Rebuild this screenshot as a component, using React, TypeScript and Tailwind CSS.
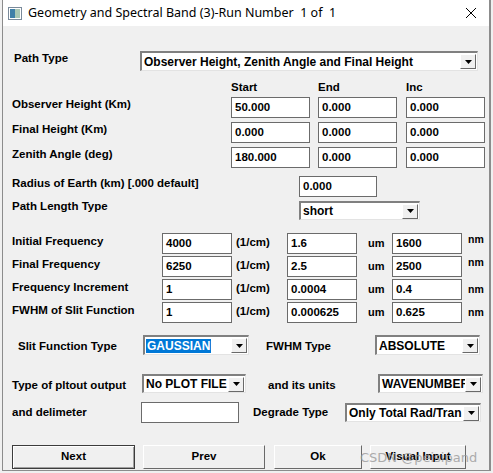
import React from "react";

const FONT = { fontFamily: '"Liberation Sans", Arial, sans-serif' };

function Field({ w, value, h = 21, ml = 0 }: { w: number; value: string; h?: number; ml?: number }) {
  return (
    <div
      className="bg-white border border-[#6b6b6b] flex items-center pl-[3px] text-[11.5px] font-bold text-black shrink-0"
      style={{ width: w, height: h, marginLeft: ml }}
    >
      {value}
    </div>
  );
}

function Arrow() {
  return (
    <div className="w-[16px] h-[15px] bg-[#f0f0f0] border-t border-l border-t-white border-l-white border-r border-b border-r-[#696969] border-b-[#696969] flex items-center justify-center shrink-0 mr-[1px]">
      <svg width="7" height="4" viewBox="0 0 7 4">
        <path d="M0 0h7L3.5 4z" fill="#000" />
      </svg>
    </div>
  );
}

function Combo({
  w,
  value,
  ml = 0,
  h = 19,
  highlight = false,
}: {
  w: number;
  value: string;
  ml?: number;
  h?: number;
  highlight?: boolean;
}) {
  return (
    <div
      className="bg-white border-t-2 border-l-2 border-t-[#808080] border-l-[#808080] border-b border-r border-b-[#e3e3e3] border-r-[#e3e3e3] flex items-center shrink-0"
      style={{ width: w, height: h, marginLeft: ml }}
    >
      <div className="flex-1 min-w-0 overflow-hidden whitespace-nowrap pl-[1px] text-[12px] font-bold text-black">
        {highlight ? (
          <span className="bg-[#0078d7] text-white px-[1px]">{value}</span>
        ) : (
          <span className="pl-[1px]">{value}</span>
        )}
      </div>
      <Arrow />
    </div>
  );
}

function Label({ children, w, pl = 9 }: { children: React.ReactNode; w: number; pl?: number }) {
  return (
    <div className="text-[11.5px] font-bold text-black whitespace-nowrap shrink-0" style={{ width: w, paddingLeft: pl }}>
      {children}
    </div>
  );
}

function Btn({ label, w, ml = 0, def = false }: { label: string; w: number; ml?: number; def?: boolean }) {
  return (
    <div
      className={
        "h-[24px] bg-[#f0f0f0] flex items-center justify-center text-[11.5px] font-bold text-black shrink-0 " +
        (def
          ? "border border-[#3c3c3c] shadow-[inset_1px_1px_0_#fff,inset_-1px_-1px_0_#a0a0a0]"
          : "border-t border-l border-t-white border-l-white border-r border-b border-r-[#696969] border-b-[#696969]")
      }
      style={{ width: w, marginLeft: ml }}
    >
      {label}
    </div>
  );
}

export default function App() {
  const freq = [
    { label: "Initial Frequency", a: "4000", b: "1.6", c: "1600", raise: true },
    { label: "Final Frequency", a: "6250", b: "2.5", c: "2500", raise: true },
    { label: "Frequency Increment", a: "1", b: "0.0004", c: "0.4", raise: false },
    { label: "FWHM of Slit Function", a: "1", b: "0.000625", c: "0.625", raise: false },
  ];
  const geo = [
    { label: "Observer Height (Km)", v: "50.000" },
    { label: "Final Height (Km)", v: "0.000" },
    { label: "Zenith Angle (deg)", v: "180.000" },
  ];

  return (
    <div className="w-[493px] h-[473px] bg-[#f0f0f0] overflow-hidden" style={FONT}>
      <div className="ml-[2px] w-[489px] h-[471px] border-l border-r-2 border-b border-[#8c8c8c] flex flex-col relative">
        {/* Title bar */}
        <div className="h-[26px] bg-white flex items-center shrink-0">
          <svg width="14" height="13" viewBox="0 0 14 13" className="ml-[5px]">
            <rect x="0.5" y="0.5" width="13" height="12" fill="#fff" stroke="#7a8a9a" />
            <rect x="2" y="2" width="5" height="9" fill="#3f7fa8" />
            <rect x="7" y="2" width="5" height="9" fill="#a9c7b4" />
          </svg>
          <span className="ml-[6px] text-[12.5px] text-black" style={{ fontFamily: '"Noto Sans", "Open Sans", sans-serif' }}>
            Geometry and Spectral Band (3)-Run Number &nbsp;1 of &nbsp;1
          </span>
          <svg width="12" height="12" viewBox="0 0 12 12" className="ml-auto mr-[12px]">
            <path d="M1 1L11 11M11 1L1 11" stroke="#000" strokeWidth="1" />
          </svg>
        </div>

        {/* Body */}
        <div className="flex-1 bg-[#f0f0f0] flex flex-col">
          {/* Path type */}
          <div className="flex items-center mt-[25px] h-[20px]">
            <Label w={137} pl={11}>
              <span className="relative top-[-2px]">Path Type</span>
            </Label>
            <Combo w={338} h={20} value="Observer Height, Zenith Angle and Final Height" />
          </div>

          {/* Column headers */}
          <div className="flex items-center mt-[10px] h-[14px] text-[11.5px] font-bold">
            <div className="w-[228px]" />
            <div className="w-[87px]">Start</div>
            <div className="w-[88px]">End</div>
            <div>Inc</div>
          </div>

          <div className="flex flex-col gap-[4px] mt-[2px]">
            {geo.map((r) => (
              <div key={r.label} className="flex items-center h-[21px]">
                <Label w={228}>
                  <span className="relative top-[-3px]">{r.label}</span>
                </Label>
                <Field w={79} value={r.v} />
                <Field w={79} value="0.000" ml={8} />
                <Field w={79} value="0.000" ml={9} />
              </div>
            ))}
          </div>

          <div className="flex items-center h-[21px] mt-[8px]">
            <Label w={296}>
              <span className="relative top-[-3px]">Radius of Earth (km) [.000 default]</span>
            </Label>
            <Field w={78} value="0.000" />
          </div>

          <div className="flex items-center h-[19px] mt-[4px]">
            <Label w={296}>
              <span className="relative top-[-4px]">Path Length Type</span>
            </Label>
            <Combo w={121} value="short" />
          </div>

          <div className="flex flex-col gap-[2px] mt-[13px]">
            {freq.map((r) => (
              <div key={r.label} className="flex items-center h-[21px]">
                <Label w={159}>
                  <span className="relative top-[-2px]">{r.label}</span>
                </Label>
                <Field w={70} value={r.a} />
                <div className="w-[55px] pl-[4px] text-[11.5px] font-bold relative top-[-1px]">(1/cm)</div>
                <Field w={70} value={r.b} />
                <div className="w-[35px] pl-[11px] text-[11px] font-bold">um</div>
                <Field w={70} value={r.c} />
                <div className={"pl-[6px] text-[10.5px] font-bold " + (r.raise ? "relative top-[-4px]" : "")}>nm</div>
              </div>
            ))}
          </div>

          {/* Slit function */}
          <div className="flex items-center h-[20px] mt-[12px]">
            <Label w={140} pl={15}>
              <span className="relative top-[2px]">Slit Function Type</span>
            </Label>
            <Combo w={106} h={20} value="GAUSSIAN" highlight />
            <Label w={126} pl={17}>
              <span className="relative top-[2px]">FWHM Type</span>
            </Label>
            <Combo w={105} h={20} value="ABSOLUTE" />
          </div>

          {/* pltout */}
          <div className="flex items-center h-[19px] mt-[19px]">
            <Label w={139}>
              <span className="relative top-[2px]">Type of pltout output</span>
            </Label>
            <Combo w={104} value="No PLOT FILE" />
            <Label w={132} pl={22}>
              <span className="relative top-[2px]">and its units</span>
            </Label>
            <Combo w={105} value="WAVENUMBER" />
          </div>

          {/* delimiter */}
          <div className="flex items-center h-[21px] mt-[9px]">
            <Label w={138}>and delimeter</Label>
            <Field w={98} value="" />
            <Label w={106} pl={14}>Degrade Type</Label>
            <Combo w={136} value="Only Total Rad/Tran" />
          </div>

          {/* Buttons */}
          <div className="flex items-center mt-[22px]">
            <div className="w-[9px]" />
            <Btn label="Next" w={123} def />
            <Btn label="Prev" w={122} ml={8} />
            <Btn label="Ok" w={88} ml={9} />
            <Btn label="Visual Input" w={96} ml={8} />
          </div>
        </div>

        {/* watermark */}
        <div
          className="absolute left-[357px] top-[448px] text-[13px] text-[#9a9a9a] opacity-80 pointer-events-none"
          style={{ fontFamily: '"DejaVu Sans", sans-serif' }}
        >
          CSDN @peisipand
        </div>
      </div>
    </div>
  );
}
